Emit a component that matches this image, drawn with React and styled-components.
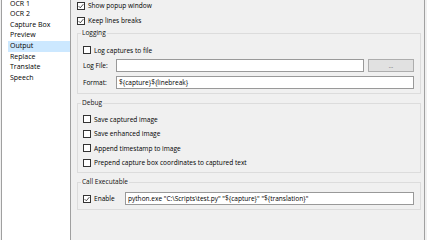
import styled, { createGlobalStyle } from "styled-components";

const GlobalStyle = createGlobalStyle`
  html, body {
    margin: 0;
    padding: 0;
    background: #f0f0f0;
  }
  body {
    font-family: "Open Sans", "Noto Sans", sans-serif;
    font-size: 6.55px;
    color: #000;
  }
`;

const pages = ["OCR 1", "OCR 2", "Capture Box", "Preview", "Output", "Replace", "Translate", "Speech"];

function Check({ checked }) {
  return (
    <Box>
      {checked && (
        <svg width="6" height="6" viewBox="0 0 6 6">
          <path d="M0.6 3.1 L2.3 4.8 L5.4 1.1" fill="none" stroke="#222" strokeWidth="0.8" />
        </svg>
      )}
    </Box>
  );
}

export default function App() {
  return (
    <Window>
      <GlobalStyle />
      <Tree>
        {pages.map((p) => (
          <TreeItem key={p} $selected={p === "Output"}>
            {p}
          </TreeItem>
        ))}
      </Tree>
      <Panel>
        <TopOptions>
          <CheckRow>
            <Check checked /> Show popup window
          </CheckRow>
          <CheckRow>
            <Check checked /> Keep lines breaks
          </CheckRow>
        </TopOptions>

        <Group $mt={3} $pt={7.5}>
          <Legend>Logging</Legend>
          <CheckRow>
            <Check /> Log captures to file
          </CheckRow>
          <FieldRow $mt={3.5} $cols="29px 1fr 46px">
            <span>Log File:</span>
            <TextBox />
            <Button>...</Button>
          </FieldRow>
          <FieldRow $mt={4} $cols="29px 1fr">
            <span>Format:</span>
            <TextBox>{"${capture}${linebreak}"}</TextBox>
          </FieldRow>
        </Group>

        <Group $mt={5} $pt={6.5}>
          <Legend>Debug</Legend>
          <CheckList>
            <CheckRow>
              <Check /> Save captured image
            </CheckRow>
            <CheckRow>
              <Check /> Save enhanced image
            </CheckRow>
            <CheckRow>
              <Check /> Append timestamp to image
            </CheckRow>
            <CheckRow>
              <Check /> Prepend capture box coordinates to captured text
            </CheckRow>
          </CheckList>
        </Group>

        <Group $mt={5} $pt={6}>
          <Legend>Call Executable</Legend>
          <FieldRow $cols="38px 1fr">
            <CheckRow>
              <Check checked /> Enable
            </CheckRow>
            <TextBox>{'python.exe "C:\\Scripts\\test.py" "${capture}" "${translation}"'}</TextBox>
          </FieldRow>
        </Group>
      </Panel>
    </Window>
  );
}

const Window = styled.div`
  display: flex;
  width: 427px;
  height: 240px;
  overflow: hidden;
  background: #f0f0f0;
`;

const Tree = styled.ul`
  list-style: none;
  margin: 0 0 0 1px;
  padding: 0;
  width: 68px;
  flex-shrink: 0;
  background: #fff;
  border-left: 1px solid #a0a0a0;
  border-right: 1px solid #a0a0a0;
  overflow: hidden;
  li:first-child {
    margin-top: -1.3px;
  }
`;

const TreeItem = styled.li`
  height: 10.6px;
  line-height: 10.6px;
  margin-left: 6px;
  padding-left: 2px;
  font-size: 7px;
  white-space: nowrap;
  background: ${({ $selected }) => ($selected ? "#cce8ff" : "transparent")};
`;

const Panel = styled.div`
  flex: 1;
  display: flex;
  flex-direction: column;
  padding: 0 3px 0 6px;
  margin-right: 2px;
  border-right: 1px solid #a0a0a0;
  min-width: 0;
`;

const TopOptions = styled.div`
  display: flex;
  flex-direction: column;
  gap: 4px;
`;

const CheckList = styled.div`
  display: flex;
  flex-direction: column;
  gap: 3.5px;
`;

const CheckRow = styled.label`
  display: flex;
  align-items: center;
  gap: 3px;
  height: 11px;
  white-space: nowrap;
`;

const Box = styled.span`
  box-sizing: border-box;
  width: 8px;
  height: 8px;
  flex-shrink: 0;
  border: 1px solid #333;
  background: #fff;
  display: flex;
  align-items: center;
  justify-content: center;
`;

const Group = styled.fieldset`
  margin: ${({ $mt }) => $mt}px 0 0;
  padding: ${({ $pt }) => $pt}px 6px 4px 5px;
  border: 1px solid #dcdcdc;
  min-width: 0;
  display: flex;
  flex-direction: column;
`;

const Legend = styled.legend`
  padding: 0 1px;
  margin-left: -2px;
  line-height: 8px;
  color: #111;
`;

const FieldRow = styled.div`
  display: grid;
  grid-template-columns: ${({ $cols }) => $cols};
  column-gap: 4px;
  align-items: center;
  margin-top: ${({ $mt }) => $mt || 0}px;
  white-space: nowrap;
`;

const TextBox = styled.div`
  box-sizing: border-box;
  height: 13px;
  padding: 0 2px;
  border: 1px solid #999;
  background: #fff;
  display: flex;
  align-items: center;
  overflow: hidden;
  white-space: nowrap;
`;

const Button = styled.div`
  box-sizing: border-box;
  height: 13px;
  border: 1px solid #adadad;
  background: #e1e1e1;
  display: flex;
  align-items: center;
  justify-content: center;
  font-size: 5.5px;
  color: #333;
`;
